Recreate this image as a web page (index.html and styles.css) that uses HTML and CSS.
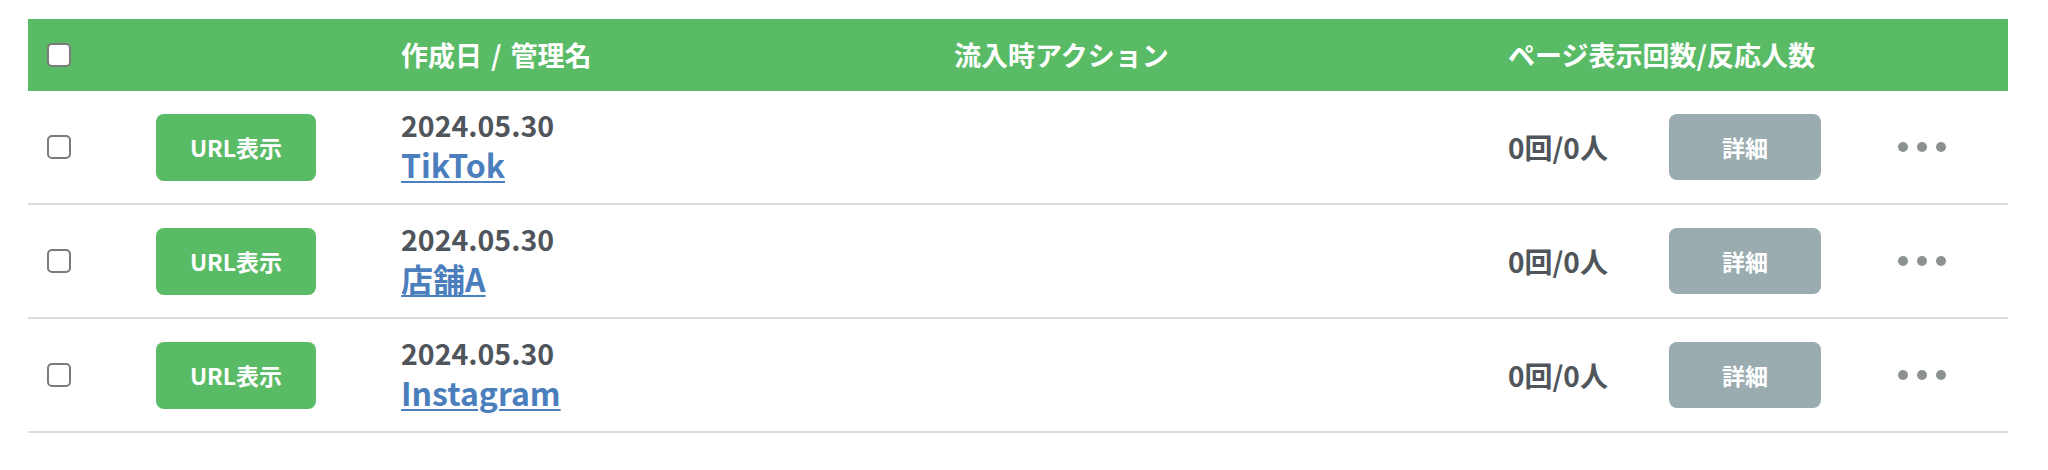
FILE: index.html
```html
<!DOCTYPE html>
<html lang="ja">
<head>
<meta charset="utf-8">
<title>一覧</title>
<link rel="stylesheet" href="styles.css">
</head>
<body>
<div class="page">
  <div class="table">
    <div class="row head">
      <div class="cell c-check"><input type="checkbox" class="chk"></div>
      <div class="cell"></div>
      <div class="cell">作成日<span class="slash">/</span>管理名</div>
      <div class="cell">流入時アクション</div>
      <div class="cell span-end">ページ表示回数/反応人数</div>
    </div>

    <div class="row">
      <div class="cell c-check"><input type="checkbox" class="chk"></div>
      <div class="cell"><button class="btn btn-url">URL表示</button></div>
      <div class="cell c-name">
        <div class="date">2024.05.30</div>
        <a class="name" href="#">TikTok</a>
      </div>
      <div class="cell"></div>
      <div class="cell count">0回/0人</div>
      <div class="cell"><button class="btn btn-detail">詳細</button></div>
      <div class="cell"><span class="dots"><i></i><i></i><i></i></span></div>
    </div>

    <div class="row">
      <div class="cell c-check"><input type="checkbox" class="chk"></div>
      <div class="cell"><button class="btn btn-url">URL表示</button></div>
      <div class="cell c-name">
        <div class="date">2024.05.30</div>
        <a class="name" href="#">店舗A</a>
      </div>
      <div class="cell"></div>
      <div class="cell count">0回/0人</div>
      <div class="cell"><button class="btn btn-detail">詳細</button></div>
      <div class="cell"><span class="dots"><i></i><i></i><i></i></span></div>
    </div>

    <div class="row">
      <div class="cell c-check"><input type="checkbox" class="chk"></div>
      <div class="cell"><button class="btn btn-url">URL表示</button></div>
      <div class="cell c-name">
        <div class="date">2024.05.30</div>
        <a class="name" href="#">Instagram</a>
      </div>
      <div class="cell"></div>
      <div class="cell count">0回/0人</div>
      <div class="cell"><button class="btn btn-detail">詳細</button></div>
      <div class="cell"><span class="dots"><i></i><i></i><i></i></span></div>
    </div>
  </div>
</div>
</body>
</html>
```

FILE: styles.css
```css
* { box-sizing: border-box; }

html, body {
  margin: 0;
  padding: 0;
  background: #ffffff;
}

body {
  font-family: "Noto Sans CJK JP", "Noto Sans", sans-serif;
  font-weight: 700;
  color: #4f555a;
}

.page {
  padding: 19px 0 0 28px;
}

.table {
  width: 1980px;
}

.row {
  display: grid;
  grid-template-columns: 128px 245px 553px 554px 161px 229px 110px;
  align-items: center;
  height: 114px;
  border-bottom: 2px solid #dddddd;
}

.row.head {
  height: 72px;
  background: #5abb67;
  border-bottom: none;
  color: #ffffff;
  font-size: 27px;
  line-height: 36px;
}

.cell {
  display: flex;
  align-items: center;
  min-width: 0;
}

.slash {
  padding: 0 9px;
}

.span-end {
  grid-column: 5 / 8;
  white-space: nowrap;
}

.c-check {
  padding-left: 19px;
}

.chk {
  appearance: none;
  -webkit-appearance: none;
  margin: 0;
  width: 24px;
  height: 24px;
  border: 2px solid #7b7b7b;
  border-radius: 5px;
  background: #ffffff;
}

.btn {
  appearance: none;
  border: none;
  margin: 0;
  padding: 0;
  font-family: inherit;
  font-weight: 700;
  font-size: 23px;
  color: #ffffff;
  border-radius: 8px;
  display: flex;
  align-items: center;
  justify-content: center;
}

.btn-url {
  width: 160px;
  height: 67px;
  background: #5abb67;
}

.btn-detail {
  width: 152px;
  height: 66px;
  background: #9aacb0;
}

.c-name {
  flex-direction: column;
  align-items: flex-start;
  padding-bottom: 2px;
}

.date {
  font-size: 28.5px;
  line-height: 36px;
}

.name {
  font-size: 32px;
  line-height: 42px;
  color: #4a7ebd;
  text-decoration: underline;
  text-decoration-thickness: 2px;
  text-underline-offset: 3px;
}

.count {
  font-size: 28px;
  line-height: 36px;
  white-space: nowrap;
}

.dots {
  display: flex;
  gap: 9px;
}

.dots i {
  display: block;
  width: 10px;
  height: 10px;
  border-radius: 50%;
  background: #8c9292;
}
```
